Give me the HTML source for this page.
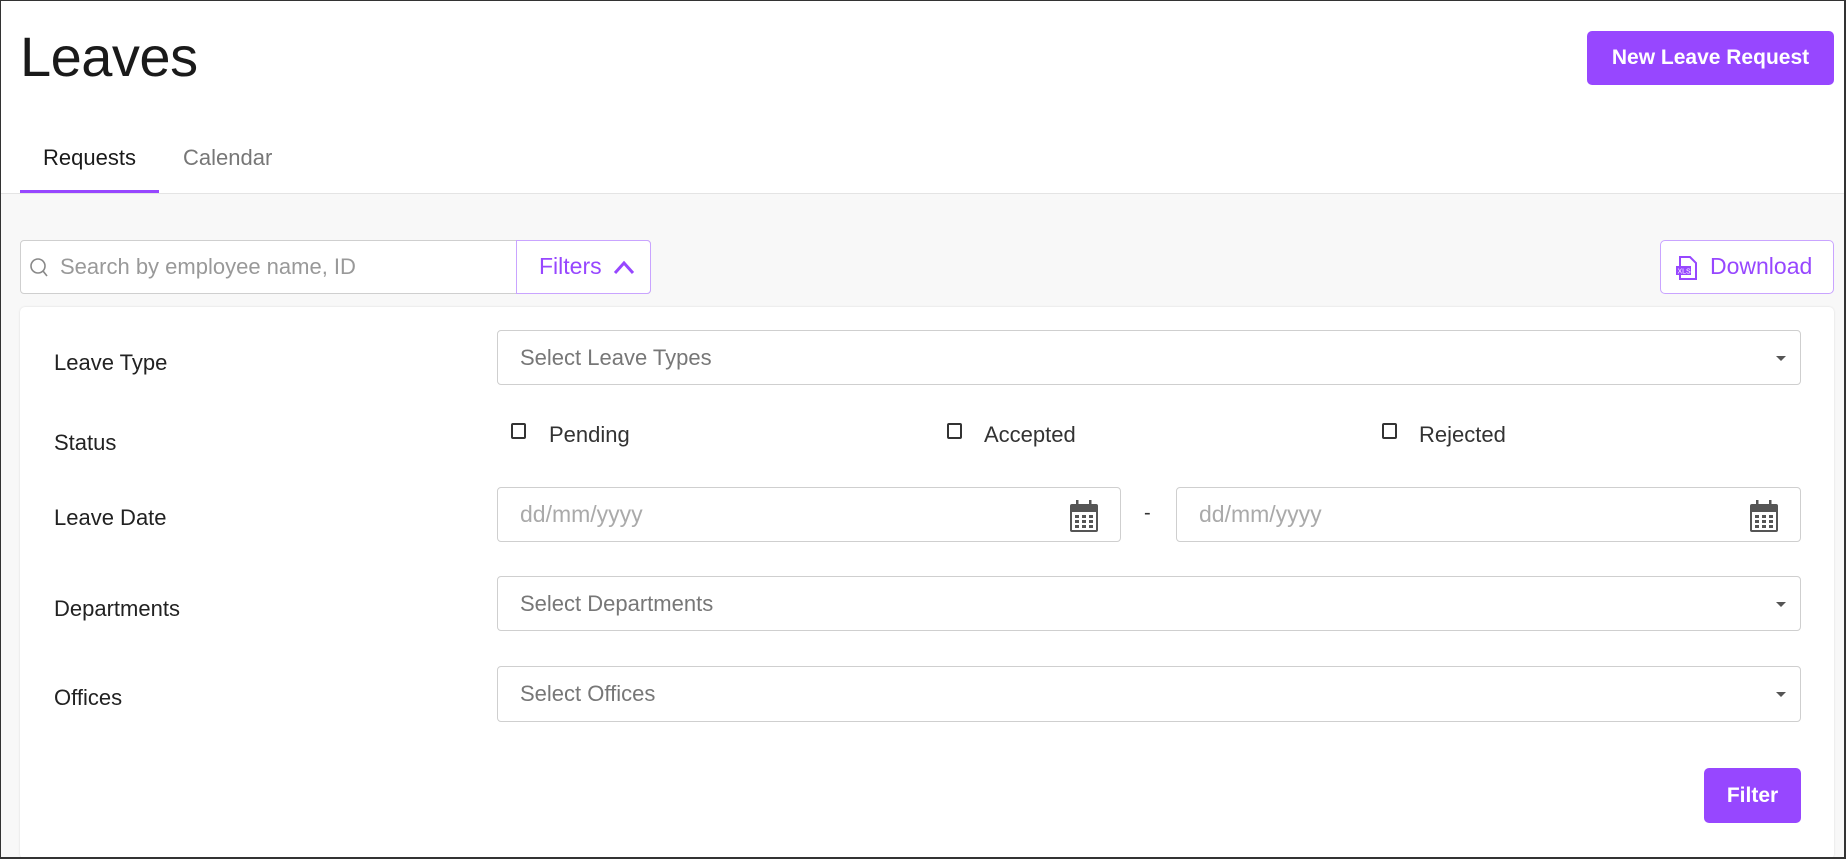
<!DOCTYPE html>
<html><head><style>
*{box-sizing:border-box;margin:0;padding:0}
body{width:1846px;height:859px;overflow:hidden;font-family:"Liberation Sans",Arial,sans-serif;background:#fff;position:relative}
.frame{position:absolute;left:0;top:0;width:1846px;height:859px;border:1px solid #333;border-right:2px solid #333;border-bottom:2px solid #333}
.abs{position:absolute}
.hdr{left:1px;top:1px;width:1843px;height:193px;background:#fff;border-bottom:1px solid #e4e4e4}
.bg{left:1px;top:194px;width:1843px;height:663px;background:#f8f8f8}
h1{position:absolute;left:20px;top:24px;font-size:56px;font-weight:400;color:#1a1a1a;letter-spacing:-0.5px}
.btn{position:absolute;background:#9747ff;color:#fff;border-radius:5px;display:flex;align-items:center;justify-content:center;font-size:21px;font-weight:700}
.tab{position:absolute;top:145px;font-size:22px}
.box{position:absolute;background:#fff;border:1px solid #cfcfcf;border-radius:4px;font-size:22px;color:#777;display:flex;align-items:center;padding-left:22px}
.lbl{position:absolute;left:54px;font-size:22px;color:#222}
.cb{position:absolute;width:15px;height:16px;border:2px solid #333;border-radius:2px;background:#fff}
.cl{position:absolute;font-size:22px;color:#333}
.caret{position:absolute;right:14px;top:50%;margin-top:-2px;border-left:5px solid transparent;border-right:5px solid transparent;border-top:5px solid #555}
.cal{position:absolute;right:20px;top:11px}
</style></head><body>
<div class="abs hdr"></div>
<div class="abs bg"></div>
<h1>Leaves</h1>
<div class="btn" style="left:1587px;top:31px;width:247px;height:54px">New Leave Request</div>
<div class="tab" style="left:43px;color:#1a1a1a">Requests</div>
<div class="tab" style="left:183px;color:#777">Calendar</div>
<div class="abs" style="left:20px;top:190px;width:139px;height:3px;background:#9747ff"></div>

<div class="abs" style="left:20px;top:240px;width:631px;height:54px;background:#fff;border:1px solid #cfcfcf;border-radius:4px"></div>
<svg class="abs" style="left:29px;top:257px" width="20" height="22" viewBox="0 0 20 22"><circle cx="9" cy="9" r="7" fill="none" stroke="#888" stroke-width="1.6"/><path d="M14 14l4 5" stroke="#888" stroke-width="1.6"/></svg>
<div class="abs" style="left:60px;top:254px;font-size:22px;color:#999">Search by employee name, ID</div>
<div class="abs" style="left:516px;top:240px;width:135px;height:54px;border:1px solid #c9a4ff;border-radius:0 4px 4px 0;background:#fff"></div>
<div class="abs" style="left:539px;top:253px;font-size:23px;color:#9747ff">Filters</div>
<svg class="abs" style="left:612px;top:258px" width="24" height="18" viewBox="0 0 24 18"><path d="M3 15L12 5l9 10" fill="none" stroke="#9747ff" stroke-width="3"/></svg>

<div class="abs" style="left:1660px;top:240px;width:174px;height:54px;border:1px solid #c9a4ff;border-radius:5px;background:#fff"></div>
<svg class="abs" style="left:1675px;top:255px" width="24" height="26" viewBox="0 0 24 26"><path d="M5 2h10l6 6v16H5z" fill="none" stroke="#9747ff" stroke-width="2"/><rect x="1" y="11" width="15" height="9" fill="#9747ff"/><text x="2.5" y="18.5" font-size="7" fill="#fff" font-family="Liberation Sans">XLS</text></svg>
<div class="abs" style="left:1710px;top:253px;font-size:23px;color:#9747ff">Download</div>

<div class="abs" style="left:20px;top:307px;width:1814px;height:552px;background:#fff;border-radius:5px;box-shadow:0 0 2px rgba(0,0,0,.12)"></div>

<div class="lbl" style="top:350px">Leave Type</div>
<div class="lbl" style="top:430px">Status</div>
<div class="lbl" style="top:505px">Leave Date</div>
<div class="lbl" style="top:596px">Departments</div>
<div class="lbl" style="top:685px">Offices</div>

<div class="box" style="left:497px;top:330px;width:1304px;height:55px">Select Leave Types<span class="caret"></span></div>

<div class="cb" style="left:511px;top:423px"></div><div class="cl" style="left:549px;top:422px">Pending</div>
<div class="cb" style="left:947px;top:423px"></div><div class="cl" style="left:984px;top:422px">Accepted</div>
<div class="cb" style="left:1382px;top:423px"></div><div class="cl" style="left:1419px;top:422px">Rejected</div>

<div class="box" style="left:497px;top:487px;width:624px;height:55px;color:#aaa;font-size:23px">dd/mm/yyyy
<svg class="cal" width="32" height="34" viewBox="0 0 32 34"><rect x="2" y="5" width="28" height="28" rx="2" fill="#555"/><rect x="4" y="13" width="24" height="18" fill="#fff"/><rect x="8" y="1" width="2.5" height="8" fill="#555"/><rect x="21" y="1" width="2.5" height="8" fill="#555"/><g fill="#555"><rect x="7" y="16" width="4" height="3"/><rect x="14" y="16" width="4" height="3"/><rect x="21" y="16" width="4" height="3"/><rect x="7" y="21" width="4" height="3"/><rect x="14" y="21" width="4" height="3"/><rect x="21" y="21" width="4" height="3"/><rect x="7" y="26" width="4" height="3"/><rect x="14" y="26" width="4" height="3"/><rect x="21" y="26" width="4" height="3"/></g></svg></div>
<div class="abs" style="left:1144px;top:502px;font-size:20px;color:#333">-</div>
<div class="box" style="left:1176px;top:487px;width:625px;height:55px;color:#aaa;font-size:23px">dd/mm/yyyy
<svg class="cal" width="32" height="34" viewBox="0 0 32 34"><rect x="2" y="5" width="28" height="28" rx="2" fill="#555"/><rect x="4" y="13" width="24" height="18" fill="#fff"/><rect x="8" y="1" width="2.5" height="8" fill="#555"/><rect x="21" y="1" width="2.5" height="8" fill="#555"/><g fill="#555"><rect x="7" y="16" width="4" height="3"/><rect x="14" y="16" width="4" height="3"/><rect x="21" y="16" width="4" height="3"/><rect x="7" y="21" width="4" height="3"/><rect x="14" y="21" width="4" height="3"/><rect x="21" y="21" width="4" height="3"/><rect x="7" y="26" width="4" height="3"/><rect x="14" y="26" width="4" height="3"/><rect x="21" y="26" width="4" height="3"/></g></svg></div>

<div class="box" style="left:497px;top:576px;width:1304px;height:55px">Select Departments<span class="caret"></span></div>
<div class="box" style="left:497px;top:666px;width:1304px;height:56px">Select Offices<span class="caret"></span></div>

<div class="btn" style="left:1704px;top:768px;width:97px;height:55px">Filter</div>
<div class="frame"></div>
</body></html>
